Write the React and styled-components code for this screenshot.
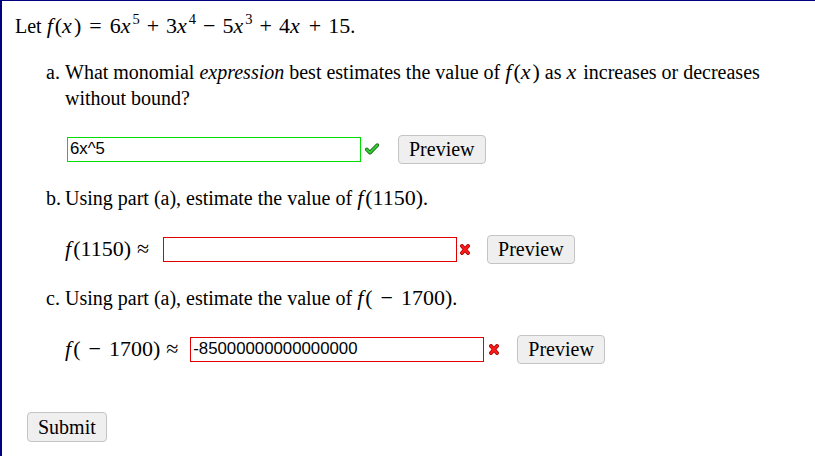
import React from 'react';
import styled, { createGlobalStyle } from 'styled-components';

const GlobalStyle = createGlobalStyle`
  html, body {
    margin: 0;
    padding: 0;
    background: #ffffff;
  }
  body {
    font-family: "Liberation Serif", "Times New Roman", serif;
    color: #000;
  }
`;

const Frame = styled.div`
  box-sizing: border-box;
  min-height: 100vh;
  border-top: 1px solid #000080;
  border-left: 2px solid #000080;
  padding: 12px 0 0 13px;
  font-size: 20px;
  line-height: 26px;
`;

const Intro = styled.p`
  margin: 0 0 20px 0;
`;

const Parts = styled.div`
  margin-left: 31px;
  display: flex;
  flex-direction: column;
  gap: 21px;
`;

const Part = styled.div`
  display: flex;
  flex-direction: column;
  gap: 23px;
`;

const Question = styled.div`
  display: grid;
  grid-template-columns: 19px 1fr;
`;

const AnswerRow = styled.div`
  display: flex;
  align-items: center;
  height: 30px;
  margin-left: 19px;
`;

/* inline TeX-like math */
const Math = styled.span`
  font-size: 22px;
  white-space: nowrap;
  margin-right: ${(p) => p.$gap || 0}px;
`;

const Mi = styled.i`
  font-style: italic;
  margin-right: 2px;
`;

const Sup = styled.sup`
  font-size: 0.66em;
  line-height: 0;
  vertical-align: 0.65em;
`;

const Op = styled.span`
  margin: 0 ${(p) => p.$space || 7}px;
`;

const AnswerInput = styled.input`
  box-sizing: border-box;
  width: 294px;
  height: 25px;
  margin: 0 0 0 ${(p) => p.$offset || 0}px;
  padding: 0 2px;
  border: 1px solid ${(p) => (p.$correct ? '#00e000' : '#e00000')};
  outline: none;
  font-family: "Liberation Sans", Arial, sans-serif;
  font-size: 16.8px;
  color: #000;
  background: #fff;
`;

const Mark = styled.span`
  display: inline-flex;
  align-items: center;
  justify-content: center;
  width: ${(p) => p.$w}px;
  margin: 0 ${(p) => p.$after}px 0 ${(p) => p.$before || 0}px;
`;

const Button = styled.button`
  box-sizing: border-box;
  height: ${(p) => p.$h || 29}px;
  padding: 0 10px;
  font-family: "Liberation Serif", "Times New Roman", serif;
  font-size: 20px;
  color: #000;
  background: #efefef;
  border: 1px solid #c4c4c4;
  border-radius: 4px;
  cursor: pointer;
`;

const SubmitWrap = styled.div`
  margin: 48px 0 0 12px;
`;

const CheckIcon = () => (
  <svg width="14" height="12" viewBox="0 0 14 12">
    <path
      d="M1.8 6.5 L5 9.6 L12.2 2.2"
      fill="none"
      stroke="#1d6b1d"
      strokeWidth="3.8"
      strokeLinecap="round"
      strokeLinejoin="round"
    />
    <path
      d="M1.8 6.5 L5 9.6 L12.2 2.2"
      fill="none"
      stroke="#30d030"
      strokeWidth="2"
      strokeLinecap="round"
      strokeLinejoin="round"
    />
  </svg>
);

const CrossIcon = () => (
  <svg width="10" height="11" viewBox="0 0 10 11">
    <path
      d="M2 2 L8 9 M8 2 L2 9"
      stroke="#a00000"
      strokeWidth="3.8"
      strokeLinecap="round"
    />
    <path
      d="M2 2 L8 9 M8 2 L2 9"
      stroke="#ff1a1a"
      strokeWidth="2.4"
      strokeLinecap="round"
    />
  </svg>
);

const F = ({ children }) => (
  <>
    <Mi>f</Mi>({children})
  </>
);

export default function App() {
  return (
    <>
      <GlobalStyle />
      <Frame>
        <Intro>
          Let{' '}
          <Math>
            <F>
              <Mi>x</Mi>
            </F>
            <Op $space={8}>=</Op>6<Mi>x</Mi>
            <Sup>5</Sup>
            <Op>+</Op>3<Mi>x</Mi>
            <Sup>4</Sup>
            <Op>−</Op>5<Mi>x</Mi>
            <Sup>3</Sup>
            <Op>+</Op>4<Mi>x</Mi>
            <Op>+</Op>15
          </Math>
          .
        </Intro>

        <Parts>
          <Part>
            <Question>
              <span>a.</span>
              <span>
                What monomial <em>expression</em> best estimates the value of{' '}
                <Math>
                  <F>
                    <Mi>x</Mi>
                  </F>
                </Math>{' '}
                as{' '}
                <Math>
                  <Mi>x</Mi>
                </Math>{' '}
                increases or decreases without bound?
              </span>
            </Question>
            <AnswerRow>
              <AnswerInput $correct $offset={2} defaultValue="6x^5" />
              <Mark $w={21} $after={16}>
                <CheckIcon />
              </Mark>
              <Button>Preview</Button>
            </AnswerRow>
          </Part>

          <Part>
            <Question>
              <span>b.</span>
              <span>
                Using part (a), estimate the value of{' '}
                <Math>
                  <F>1150</F>
                </Math>
                .
              </span>
            </Question>
            <AnswerRow>
              <Math $gap={8}>
                <F>1150</F>
                <Op $space={6}>≈</Op>
              </Math>
              <AnswerInput defaultValue="" />
              <Mark $w={10} $before={3} $after={17}>
                <CrossIcon />
              </Mark>
              <Button>Preview</Button>
            </AnswerRow>
          </Part>

          <Part>
            <Question>
              <span>c.</span>
              <span>
                Using part (a), estimate the value of{' '}
                <Math>
                  <F>
                    <Op $space={8}>−</Op>1700
                  </F>
                </Math>
                .
              </span>
            </Question>
            <AnswerRow>
              <Math $gap={6}>
                <F>
                  <Op $space={8}>−</Op>1700
                </F>
                <Op $space={6}>≈</Op>
              </Math>
              <AnswerInput defaultValue="-85000000000000000" />
              <Mark $w={10} $before={5} $after={18}>
                <CrossIcon />
              </Mark>
              <Button>Preview</Button>
            </AnswerRow>
          </Part>
        </Parts>

        <SubmitWrap>
          <Button $h={30}>Submit</Button>
        </SubmitWrap>
      </Frame>
    </>
  );
}
